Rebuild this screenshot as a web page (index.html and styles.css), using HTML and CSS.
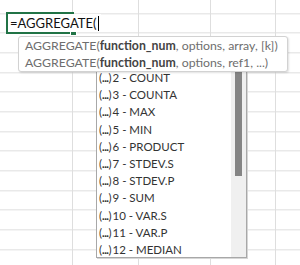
FILE: index.html
```html
<!DOCTYPE html>
<html lang="en">
<head>
  <meta charset="UTF-8">
  <meta name="viewport" content="width=device-width, initial-scale=1">
  <title>AGGREGATE</title>
  <link rel="stylesheet" href="styles.css">
</head>
<body>

  <div class="sheet">
    <div class="active-cell"><span class="handle"></span></div>
    <div class="editor">=AGGREGATE(<span class="caret"></span></div>

    <div class="tip">
      <div class="sig">AGGREGATE(<b>function_num</b>, options, array, [k])</div>
      <div class="sig">AGGREGATE(<b>function_num</b>, options, ref1, ...)</div>
    </div>

    <div class="pick">
      <ul class="items">
        <li><span class="ico">(<b>...</b>)</span>2 - COUNT</li>
        <li><span class="ico">(<b>...</b>)</span>3 - COUNTA</li>
        <li><span class="ico">(<b>...</b>)</span>4 - MAX</li>
        <li><span class="ico">(<b>...</b>)</span>5 - MIN</li>
        <li><span class="ico">(<b>...</b>)</span>6 - PRODUCT</li>
        <li><span class="ico">(<b>...</b>)</span>7 - STDEV.S</li>
        <li><span class="ico">(<b>...</b>)</span>8 - STDEV.P</li>
        <li><span class="ico">(<b>...</b>)</span>9 - SUM</li>
        <li><span class="ico">(<b>...</b>)</span>10 - VAR.S</li>
        <li><span class="ico">(<b>...</b>)</span>11 - VAR.P</li>
        <li><span class="ico">(<b>...</b>)</span>12 - MEDIAN</li>
      </ul>
      <div class="scroll"><div class="thumb"></div></div>
    </div>
  </div>

</body>
</html>
```

FILE: styles.css
```css
body {
  margin: 0;
  padding: 0;
  background: #fff;
  font-family: Lato, "Liberation Sans", sans-serif;
  overflow: hidden;
}
.sheet {
  position: relative;
  width: 300px;
  height: 265px;
  overflow: hidden;
  background-image:
    linear-gradient(to right, transparent 72px, #dedede 72px 73px, transparent 73px 138px, #dedede 138px 139px, transparent 139px 210px, #dedede 210px 211px, transparent 211px 275px, #dedede 275px 276px, transparent 276px),
    repeating-linear-gradient(to bottom, transparent 0 18.67px, #dedede 18.67px 19.67px);
  background-position: 0 0, 0 -5.67px;
}
.active-cell {
  position: absolute;
  left: 6px;
  top: 12px;
  width: 66px;
  height: 18px;
  border: 2px solid #217346;
  border-right: none;
}
.handle {
  position: absolute;
  right: -3px;
  bottom: -4px;
  width: 5px;
  height: 5px;
  background: #217346;
  border: 1px solid #fff;
}
.editor {
  position: absolute;
  left: 8px;
  top: 14px;
  height: 18px;
  padding: 0 2px;
  background: #fff;
  font-size: 13px;
  line-height: 18px;
  color: #111;
  display: flex;
  align-items: center;
  white-space: nowrap;
}
.caret {
  width: 1px;
  height: 15px;
  margin-left: 1px;
  background: #000;
}
.tip {
  position: absolute;
  left: 18px;
  top: 36px;
  width: 257px;
  height: 34px;
  padding: 0 5px 0 6px;
  border: 1px solid #d2d2d2;
  border-radius: 3px;
  background: #fff;
  box-shadow: 1px 1px 2px rgba(0,0,0,0.12);
  z-index: 2;
  font-size: 12.3px;
  line-height: 17px;
  color: #6e6e6e;
  white-space: nowrap;
}
.sig b {
  color: #444;
  font-weight: 700;
}
.pick {
  position: absolute;
  left: 96px;
  top: 67px;
  width: 149px;
  height: 189px;
  border: 1px solid #a8a8a8;
  background: #fff;
  box-shadow: 1px 1px 0 #d6d6d6;
  display: flex;
  z-index: 1;
}
.items {
  flex: 1;
  list-style: none;
  margin: 0;
  padding: 1px 0 0;
}
.items li {
  height: 17.2px;
  line-height: 17.2px;
  padding-left: 2px;
  font-size: 11.5px;
  color: #333;
  white-space: nowrap;
}
.ico {
  margin-right: 1px;
}
.ico b {
  font-size: 11px;
  font-weight: 900;
  letter-spacing: -0.5px;
}
.scroll {
  width: 15px;
  background: #f0f0f0;
}
.thumb {
  width: 7px;
  height: 108px;
  margin-left: 4px;
  background: #858585;
}
```
